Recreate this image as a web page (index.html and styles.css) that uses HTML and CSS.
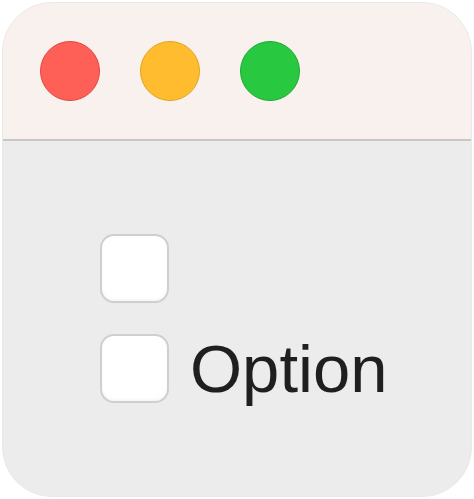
FILE: index.html
```html
<!DOCTYPE html>
<html>
<head>
<meta charset="utf-8">
<link rel="stylesheet" href="styles.css">
</head>
<body>
<div class="window">
  <div class="titlebar">
    <span class="light red"></span>
    <span class="light yellow"></span>
    <span class="light green"></span>
  </div>
  <div class="content">
    <label class="row"><span class="box"></span></label>
    <label class="row"><span class="box"></span><span class="label">Option</span></label>
  </div>
</div>
</body>
</html>
```
FILE: styles.css
```css
html, body {
  margin: 0;
  padding: 0;
  background: #ffffff;
}
body {
  padding: 2px;
  font-family: "Liberation Sans", Arial, sans-serif;
}
.window {
  width: 470px;
  height: 495px;
  box-sizing: border-box;
  border: 1px solid #ebe8e6;
  border-radius: 50px;
  overflow: hidden;
  background: #ececec;
  display: flex;
  flex-direction: column;
}
.titlebar {
  height: 136px;
  flex: none;
  background: #f8f1ee;
  border-bottom: 2px solid #c9c7c6;
  display: flex;
  align-items: center;
  gap: 40px;
  padding-left: 37px;
}
.light {
  width: 60px;
  height: 60px;
  box-sizing: border-box;
  border-radius: 50%;
  display: block;
}
.red { background: #fe5f57; border: 1.5px solid #e2463f; }
.yellow { background: #febc2e; border: 1.5px solid #e0a327; }
.green { background: #28c840; border: 1.5px solid #1eab30; }
.content {
  padding: 93px 0 0 97px;
  display: flex;
  flex-direction: column;
  gap: 32px;
}
.row {
  display: flex;
  align-items: center;
  gap: 21px;
  height: 68px;
}
.box {
  width: 69px;
  height: 69px;
  box-sizing: border-box;
  background: #ffffff;
  border: 2px solid #cfcfcf;
  border-radius: 14px;
  box-shadow: inset 0 -2px 3px rgba(0,0,0,0.04);
  flex: none;
}
.label {
  font-size: 67px;
  color: #1f1f1f;
  line-height: 1;
}
```
